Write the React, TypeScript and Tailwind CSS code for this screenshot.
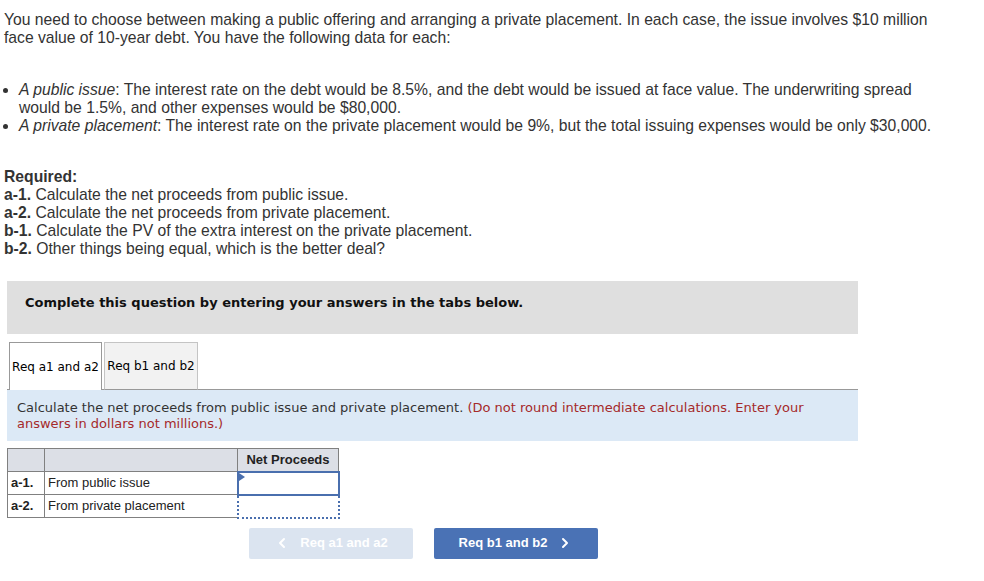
import { ChevronLeft, ChevronRight } from "lucide-react";

const body = "font-['Liberation_Sans',Arial,sans-serif]";
const verdana = "font-['DejaVu_Sans',Verdana,sans-serif]";

function Intro() {
  return (
    <div className={`${body} text-[15.7px] leading-[18px] text-[#333] pl-[4px] pt-[11px] w-[949px]`}>
      <p>
        You need to choose between making a public offering and arranging a private placement. In each case, the issue
        involves $10 million face value of 10-year debt. You have the following data for each:
      </p>
      <ul className="mt-[34px] list-disc pl-[15px]">
        <li>
          <i>A public issue</i>: The interest rate on the debt would be 8.5%, and the debt would be issued at face value.
          The underwriting spread would be 1.5%, and other expenses would be $80,000.
        </li>
        <li>
          <i>A private placement</i>: The interest rate on the private placement would be 9%, but the total issuing
          expenses would be only $30,000.
        </li>
      </ul>
      <div className="mt-[33px]">
        <p className="font-bold">Required:</p>
        <p>
          <b>a-1.</b> Calculate the net proceeds from public issue.
        </p>
        <p>
          <b>a-2.</b> Calculate the net proceeds from private placement.
        </p>
        <p>
          <b>b-1.</b> Calculate the PV of the extra interest on the private placement.
        </p>
        <p>
          <b>b-2.</b> Other things being equal, which is the better deal?
        </p>
      </div>
    </div>
  );
}

function Tabs() {
  return (
    <div className={`${verdana} flex items-end mt-[8px] h-[48px] text-[12px] text-black`}>
      <div className="w-[2px] h-full border-b border-[#999]" />
      <div className="h-full w-[93px] flex items-center justify-center bg-white border border-b-0 border-[#999]">
        Req a1 and a2
      </div>
      <div className="w-[2px] h-full border-b border-[#999]" />
      <div className="h-full w-[94px] flex items-center justify-center bg-[#f2f2f2] border border-[#c4c4c4] border-b-[#999]">
        Req b1 and b2
      </div>
      <div className="flex-1 h-full border-b border-[#999]" />
    </div>
  );
}

function ProceedsTable() {
  const cell = "border border-[#808080] h-[23px] px-[3px]";
  return (
    <table className={`${body} mt-[7px] border-collapse text-[13px] text-[#222]`}>
      <thead>
        <tr className="bg-[#dcdfe6]">
          <th className={`${cell} w-[37px]`} />
          <th className={`${cell} w-[193px]`} />
          <th className={`${cell} w-[101px] text-center font-bold`}>Net Proceeds</th>
        </tr>
      </thead>
      <tbody>
        <tr>
          <td className={`${cell} font-bold`}>a-1.</td>
          <td className={cell}>From public issue</td>
          <td className="relative h-[23px] border-2 border-[#4a6fae] bg-white p-0">
            <span className="absolute left-0 top-0 w-0 h-0 border-t-[4px] border-b-[4px] border-l-[6px] border-t-transparent border-b-transparent border-l-[#4a6fae]" />
          </td>
        </tr>
        <tr>
          <td className={`${cell} font-bold`}>a-2.</td>
          <td className={cell}>From private placement</td>
          <td className="h-[23px] border-2 border-dotted border-[#4a6fae] bg-white p-0" />
        </tr>
      </tbody>
    </table>
  );
}

export default function App() {
  return (
    <div className="bg-white min-h-[581px] w-[984px]">
      <Intro />
      <div className="pl-[7px] w-[858px]">
        <div className={`${verdana} mt-[23px] h-[53px] bg-[#dfdfdf] pl-[18px] pt-[14px] text-[13px] leading-[16px] font-bold text-[#111]`}>
          Complete this question by entering your answers in the tabs below.
        </div>
        <Tabs />
        <div className={`${verdana} bg-[#dce9f6] pl-[10px] pr-[10px] pt-[10px] pb-[9px] text-[13px] leading-[16px] text-[#333]`}>
          Calculate the net proceeds from public issue and private placement.{" "}
          <span className="text-[#a52a2a]">
            (Do not round intermediate calculations. Enter your answers in dollars not millions.)
          </span>
        </div>
        <ProceedsTable />
        <div className={`${body} flex gap-[21px] mt-[9px] ml-[242px] text-[13px] font-bold text-white`}>
          <button className="w-[164px] h-[31px] rounded-[2px] bg-[#dbe4f0] flex items-center justify-center gap-[10px]">
            <ChevronLeft size={16} strokeWidth={3} />
            Req a1 and a2
          </button>
          <button className="w-[164px] h-[31px] rounded-[2px] bg-[#4a72b5] flex items-center justify-center gap-[10px]">
            Req b1 and b2
            <ChevronRight size={16} strokeWidth={3} />
          </button>
        </div>
      </div>
    </div>
  );
}
